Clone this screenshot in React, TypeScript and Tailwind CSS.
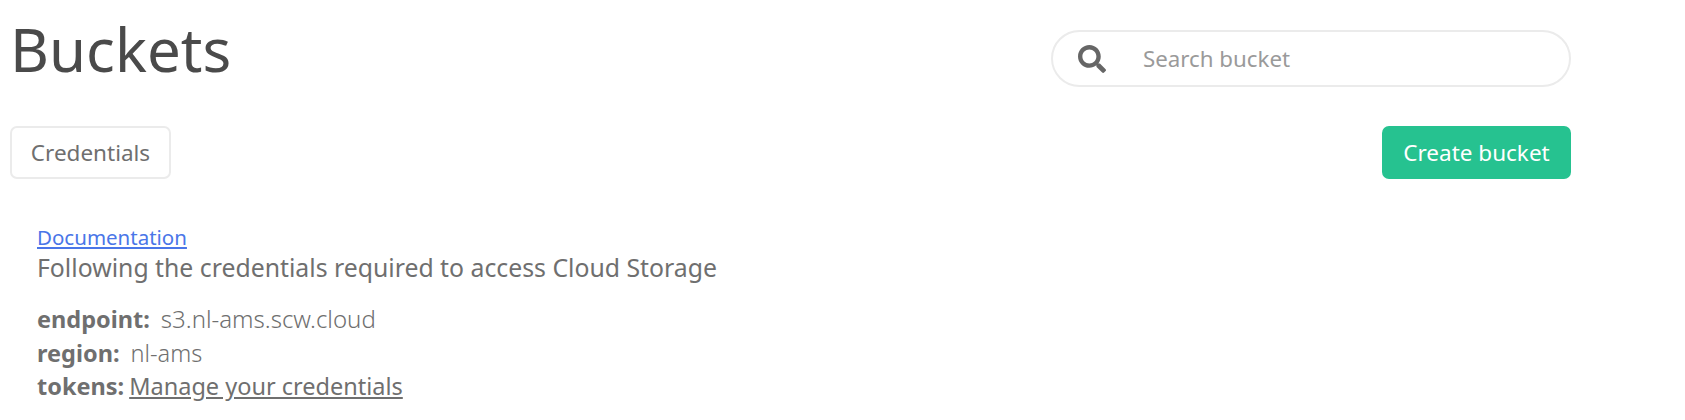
export default function App() {
  return (
    <div className="h-[420px] w-[1685px] overflow-hidden bg-white pl-[10px] pr-[114px] pt-[16px] font-['Noto_Sans',sans-serif] text-[#6f6f6f]">
      {/* Title and search */}
      <div className="flex h-[84px] items-start justify-between">
        <h1 className="text-[60px] leading-[66px] text-[#4a4a4a]">Buckets</h1>
        <div className="mt-[14px] flex h-[57px] w-[520px] items-center rounded-full border-2 border-[#ebebeb] pl-[25px]">
          <svg viewBox="0 0 512 512" className="h-[28px] w-[28px] fill-[#666666]">
            <path d="M505 442.7L405.3 343c-4.5-4.5-10.6-7-17-7H372c27.6-35.3 44-79.7 44-128C416 93.1 322.9 0 208 0S0 93.1 0 208s93.1 208 208 208c48.3 0 92.7-16.4 128-44v16.3c0 6.4 2.5 12.5 7 17l99.7 99.7c9.4 9.4 24.6 9.4 33.9 0l28.3-28.3c9.4-9.4 9.4-24.6.1-34zM208 336c-70.7 0-128-57.2-128-128 0-70.7 57.2-128 128-128 70.7 0 128 57.2 128 128 0 70.7-57.2 128-128 128z" />
          </svg>
          <span className="ml-[37px] text-[22.3px] text-[#9a9a9a]">Search bucket</span>
        </div>
      </div>

      {/* Actions */}
      <div className="mt-[26px] flex items-center justify-between">
        <button className="h-[53px] w-[161px] rounded-[7px] border-2 border-[#ebebeb] text-[22.5px] text-[#6f6f6f]">
          Credentials
        </button>
        <button className="h-[53px] w-[189px] rounded-[7px] bg-[#26c290] text-[22.5px] text-white">
          Create bucket
        </button>
      </div>

      {/* Credentials info */}
      <div className="mt-[44px] pl-[27px]">
        <a className="block text-[20.5px] leading-[28px] text-[#4a76e8] underline">Documentation</a>
        <p className="text-[24.8px] leading-[33px]">Following the credentials required to access Cloud Storage</p>
        <div className="mt-[18px] text-[23.5px] leading-[33.5px]">
          <p><span className="font-bold">endpoint:</span><span className="ml-[11px] text-[24px] font-light">s3.nl-ams.scw.cloud</span></p>
          <p><span className="font-bold">region:</span><span className="ml-[11px] font-light">nl-ams</span></p>
          <p><span className="font-bold">tokens:</span><a className="ml-[5px] underline">Manage your credentials</a></p>
        </div>
      </div>
    </div>
  );
}
